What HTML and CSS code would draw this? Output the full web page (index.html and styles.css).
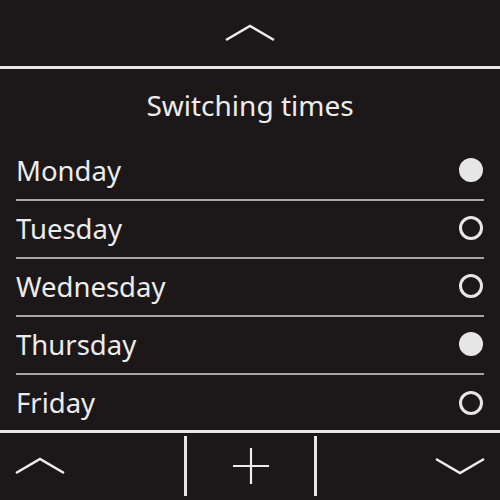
FILE: index.html
```html
<!DOCTYPE html>
<html>
<head>
<meta charset="utf-8">
<link rel="stylesheet" href="styles.css">
</head>
<body>
<div class="screen">
  <div class="top">
    <svg class="chev" width="50" height="18" viewBox="0 0 50 18"><polyline points="1,16 25,2 49,16" fill="none" stroke="#ececec" stroke-width="2.6"/></svg>
  </div>
  <div class="title">Switching times</div>
  <ul class="list">
    <li class="row"><span>Monday</span><span class="dot on"></span></li>
    <li class="row"><span>Tuesday</span><span class="dot"></span></li>
    <li class="row"><span>Wednesday</span><span class="dot"></span></li>
    <li class="row"><span>Thursday</span><span class="dot on"></span></li>
    <li class="row last"><span>Friday</span><span class="dot"></span></li>
  </ul>
  <div class="bottom">
    <div class="cell left">
      <svg width="50" height="18" viewBox="0 0 50 18"><polyline points="1,16 25,2 49,16" fill="none" stroke="#ececec" stroke-width="2.6"/></svg>
    </div>
    <div class="vline"></div>
    <div class="cell mid">
      <svg width="36" height="36" viewBox="0 0 36 36"><path d="M18 0V36M0 18H36" stroke="#ececec" stroke-width="2.2" fill="none"/></svg>
    </div>
    <div class="vline"></div>
    <div class="cell right">
      <svg width="50" height="18" viewBox="0 0 50 18"><polyline points="1,2 25,16 49,2" fill="none" stroke="#ececec" stroke-width="2.6"/></svg>
    </div>
  </div>
</div>
</body>
</html>
```
FILE: styles.css
```css
* { box-sizing: border-box; }
html, body { margin: 0; padding: 0; background: #1c1819; }
.screen {
  width: 500px;
  height: 500px;
  background: #1c1819;
  color: #ececec;
  font-family: "Noto Sans", "Open Sans", sans-serif;
  display: flex;
  flex-direction: column;
  overflow: hidden;
}
.top {
  height: 69px;
  border-bottom: 3px solid #e6e6e6;
  display: flex;
  justify-content: center;
  padding-top: 24px;
}
.top svg { display: block; }
.title {
  height: 74px;
  display: flex;
  align-items: center;
  justify-content: center;
  font-size: 28px;
  padding-bottom: 2px;
}
.list {
  list-style: none;
  margin: 0;
  padding: 0 16px;
}
.row {
  height: 58px;
  border-bottom: 2px solid #a6a6a6;
  display: flex;
  align-items: center;
  justify-content: space-between;
  font-size: 27.5px;
  padding-bottom: 2px;
}
.row.last {
  height: 55px;
  border-bottom: none;
  padding-bottom: 0;
}
.dot {
  width: 24px;
  height: 24px;
  border-radius: 50%;
  border: 3.5px solid #e6e6e6;
  margin-right: 1px;
}
.dot.on { background: #e6e6e6; }
.bottom {
  border-top: 3px solid #e6e6e6;
  height: 70px;
  display: flex;
  padding-top: 3px;
  padding-bottom: 4px;
}
.cell {
  display: flex;
  align-items: center;
}
.cell svg { display: block; }
.left { width: 184px; padding-left: 15px; }
.mid { width: 127px; justify-content: center; }
.right { flex: 1; justify-content: flex-end; padding-right: 15px; }
.vline {
  width: 3px;
  background: #e6e6e6;
}
```
